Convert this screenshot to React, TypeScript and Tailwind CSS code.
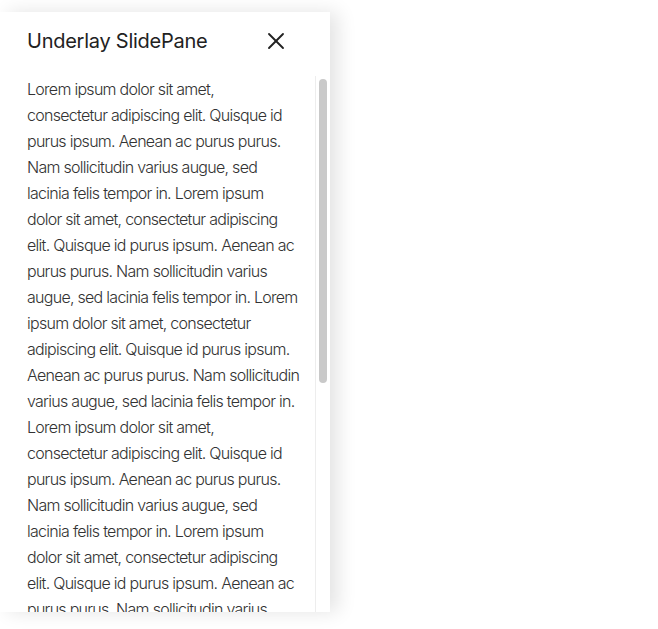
import { X } from "lucide-react";

// line breaks as they fall in the pane
const lines = [
  "Lorem ipsum dolor sit amet,",
  "consectetur adipiscing elit. Quisque id",
  "purus ipsum. Aenean ac purus purus.",
  "Nam sollicitudin varius augue, sed",
  "lacinia felis tempor in. Lorem ipsum",
  "dolor sit amet, consectetur adipiscing",
  "elit. Quisque id purus ipsum. Aenean ac",
  "purus purus. Nam sollicitudin varius",
  "augue, sed lacinia felis tempor in. Lorem",
  "ipsum dolor sit amet, consectetur",
  "adipiscing elit. Quisque id purus ipsum.",
  "Aenean ac purus purus. Nam sollicitudin",
  "varius augue, sed lacinia felis tempor in.",
];

const text = [...lines, ...lines, ...lines];

export default function App() {
  return (
    <div className="min-h-[629px] bg-white pt-[12px] font-['Inter',sans-serif]">
      <div className="h-[600px] w-full">
        <aside className="flex h-full w-[330px] flex-col bg-white shadow-[8px_0_18px_rgba(0,0,0,0.11)]">
          {/* Header */}
          <div className="flex items-center justify-between pl-[27px] pr-[47px] pt-[17px] pb-[23px]">
            <h2 className="text-[20px] leading-[24px] tracking-[-0.25px] text-[#222]">
              Underlay SlidePane
            </h2>
            <button className="flex h-[24px] w-[14px] items-center justify-center text-[#222]">
              <X size={28} strokeWidth={1.6} className="shrink-0" />
            </button>
          </div>

          {/* Body */}
          <div className="flex min-h-0 flex-1">
            <div className="min-w-0 flex-1 overflow-hidden pl-[27px]">
              <p className="text-[16px] font-light leading-[26px] tracking-[-0.72px] text-[#333]">
                {text.map((line, i) => (
                  <span key={i} className="block whitespace-nowrap">
                    {line}
                  </span>
                ))}
              </p>
            </div>
            <div className="w-[15px] shrink-0 border-l border-[#ededed] pt-[3px] pl-[3px]">
              <div className="h-[304px] w-[8px] rounded-full bg-[#c9c9c9]" />
            </div>
          </div>
        </aside>
      </div>
    </div>
  );
}
